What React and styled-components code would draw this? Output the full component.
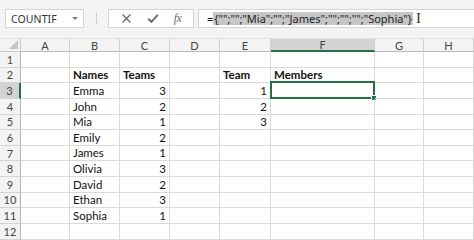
import React from "react";
import styled, { createGlobalStyle } from "styled-components";

const Global = createGlobalStyle`
  html, body { margin: 0; padding: 0; background: #ffffff; }
  body { width: 474px; height: 240px; overflow: hidden; }
  * { box-sizing: border-box; }
`;

const Page = styled.div`
  width: 474px;
  height: 240px;
  display: flex;
  flex-direction: column;
  overflow: hidden;
  background: #fff;
`;

const TopBar = styled.div`
  height: 39px;
  flex: none;
  background: #f3f3f3;
  display: flex;
  align-items: flex-start;
  padding: 9px 0 0 5px;
  border-bottom: 1px solid #e0e0e0;
`;

const NameBox = styled.div`
  width: 79px;
  height: 19px;
  background: #fff;
  border: 1px solid #d4d4d4;
  display: flex;
  align-items: center;
  justify-content: space-between;
  padding: 0 4px 0 5px;
  font-family: "Noto Sans", "Open Sans", sans-serif;
  font-size: 10.5px;
  color: #333;
  letter-spacing: 0.1px;
`;

const Caret = styled.span`
  width: 0;
  height: 0;
  border-left: 3px solid transparent;
  border-right: 3px solid transparent;
  border-top: 3px solid #7a7a7a;
  margin-right: 1px;
`;

const Grip = styled.div`
  width: 24px;
  height: 19px;
  display: flex;
  align-items: center;
  justify-content: center;
`;

const Dots = styled.span`
  width: 1px;
  height: 11px;
  background-image: linear-gradient(#b0b0b0 50%, transparent 50%);
  background-size: 1px 2px;
`;

const ButtonBox = styled.div`
  width: 86px;
  height: 19px;
  background: #fff;
  border: 1px solid #d4d4d4;
  display: flex;
  align-items: center;
  justify-content: space-around;
  padding: 0 4px;
`;

const Fx = styled.span`
  font-family: "Liberation Serif", serif;
  font-style: italic;
  font-size: 12px;
  color: #6a6a6a;
  letter-spacing: -0.5px;
`;

const FormulaBox = styled.div`
  margin-left: 4px;
  flex: 1;
  height: 19px;
  background: #fff;
  border: 1px solid #d4d4d4;
  border-right: none;
  display: flex;
  align-items: center;
  padding-left: 8px;
  font-family: "Noto Sans", "Open Sans", sans-serif;
  font-size: 11px;
  color: #222;
  white-space: nowrap;
`;

const Selected = styled.span`
  background: #c6c6c6;
  padding: 0 1px;
  line-height: 13px;
`;

const Cursor = styled.span`
  margin-left: 3px;
  font-family: "Liberation Serif", serif;
  font-size: 15px;
  color: #333;
  line-height: 15px;
`;

const Grid = styled.div`
  display: grid;
  grid-template-columns: 21px 49px 50px 50px 50px 51px 104px 49px 50px;
  grid-template-rows: 13px repeat(12, 15.64px);
`;

const Corner = styled.div`
  background: #f3f3f3;
  border-right: 1px solid #c8c8c8;
  border-bottom: 1px solid #c8c8c8;
  display: flex;
  align-items: flex-end;
  justify-content: flex-end;
  padding: 0 2px 2px 0;
`;

const Triangle = styled.span`
  width: 0;
  height: 0;
  border-left: 9px solid transparent;
  border-bottom: 9px solid #c4c4c4;
`;

const ColHead = styled.div`
  background: ${(p) => (p.$active ? "#d3d3d3" : "#f3f3f3")};
  border-right: 1px solid #d0d0d0;
  border-bottom: ${(p) => (p.$active ? "2px solid #217346" : "1px solid #b8b8b8")};
  display: flex;
  align-items: center;
  justify-content: center;
  font-family: "Lato", "Open Sans", sans-serif;
  font-size: 11px;
  color: #444;
`;

const RowHead = styled.div`
  background: ${(p) => (p.$active ? "#d3d3d3" : "#f3f3f3")};
  border-right: ${(p) => (p.$active ? "2px solid #217346" : "1px solid #b4b4b4")};
  border-bottom: 1px solid #d4d4d4;
  display: flex;
  align-items: center;
  justify-content: center;
  font-family: "Lato", "Open Sans", sans-serif;
  font-size: 11px;
  color: #444;
`;

const Cell = styled.div`
  position: relative;
  border-right: 1px solid #dadada;
  border-bottom: 1px solid #dadada;
  display: flex;
  align-items: flex-end;
  justify-content: ${(p) => (p.$right ? "flex-end" : "flex-start")};
  padding: 0 3px 0 3px;
  font-family: "Lato", "Open Sans", sans-serif;
  font-size: 11.5px;
  font-weight: ${(p) => (p.$bold ? 700 : 400)};
  color: #111;
  line-height: 14px;
  white-space: nowrap;
`;

const SelectionFrame = styled.div`
  position: absolute;
  top: -2px;
  left: -1px;
  right: -1px;
  bottom: -1px;
  border: 2px solid #217346;
  pointer-events: none;
`;

const Handle = styled.div`
  position: absolute;
  right: -4px;
  bottom: -4px;
  width: 6px;
  height: 6px;
  background: #217346;
  border: 1px solid #fff;
`;

const columns = ["A", "B", "C", "D", "E", "F", "G", "H"];

const names = ["Emma", "John", "Mia", "Emily", "James", "Olivia", "David", "Ethan", "Sophia"];
const teams = [3, 2, 1, 2, 1, 3, 2, 3, 1];

function cellContent(row, col) {
  if (row === 2) {
    const h = { B: "Names", C: "Teams", E: "Team", F: "Members" };
    return h[col] ? { text: h[col], bold: true } : null;
  }
  if (row >= 3 && row <= 11) {
    if (col === "B") return { text: names[row - 3] };
    if (col === "C") return { text: String(teams[row - 3]), right: true };
    if (col === "E" && row <= 5) return { text: String(row - 2), right: true };
  }
  return null;
}

export default function App() {
  const rows = Array.from({ length: 12 }, (_, i) => i + 1);
  return (
    <Page>
      <Global />
      <TopBar>
        <NameBox>
          <span>COUNTIF</span>
          <Caret />
        </NameBox>
        <Grip>
          <Dots />
        </Grip>
        <ButtonBox>
          <svg width="11" height="11" viewBox="0 0 11 11">
            <path d="M1.5 1.5 L9.5 9.5 M9.5 1.5 L1.5 9.5" stroke="#6a6a6a" strokeWidth="1.3" fill="none" />
          </svg>
          <svg width="12" height="11" viewBox="0 0 12 11">
            <path d="M1.2 5.8 L4.4 8.8 L10.8 1.8" stroke="#6a6a6a" strokeWidth="1.9" fill="none" />
          </svg>
          <Fx>fx</Fx>
        </ButtonBox>
        <FormulaBox>
          <span>=</span>
          <Selected>{'{"";"";"Mia";"";"James";"";"";"";"Sophia"}'}</Selected>
          <Cursor>I</Cursor>
        </FormulaBox>
      </TopBar>
      <Grid>
        <Corner>
          <Triangle />
        </Corner>
        {columns.map((c) => (
          <ColHead key={c} $active={c === "F"}>
            {c}
          </ColHead>
        ))}
        {rows.map((r) => (
          <React.Fragment key={r}>
            <RowHead $active={r === 3}>{r}</RowHead>
            {columns.map((c) => {
              const content = cellContent(r, c);
              const sel = r === 3 && c === "F";
              return (
                <Cell key={c} $bold={content?.bold} $right={content?.right}>
                  {content?.text}
                  {sel && (
                    <SelectionFrame>
                      <Handle />
                    </SelectionFrame>
                  )}
                </Cell>
              );
            })}
          </React.Fragment>
        ))}
      </Grid>
    </Page>
  );
}
